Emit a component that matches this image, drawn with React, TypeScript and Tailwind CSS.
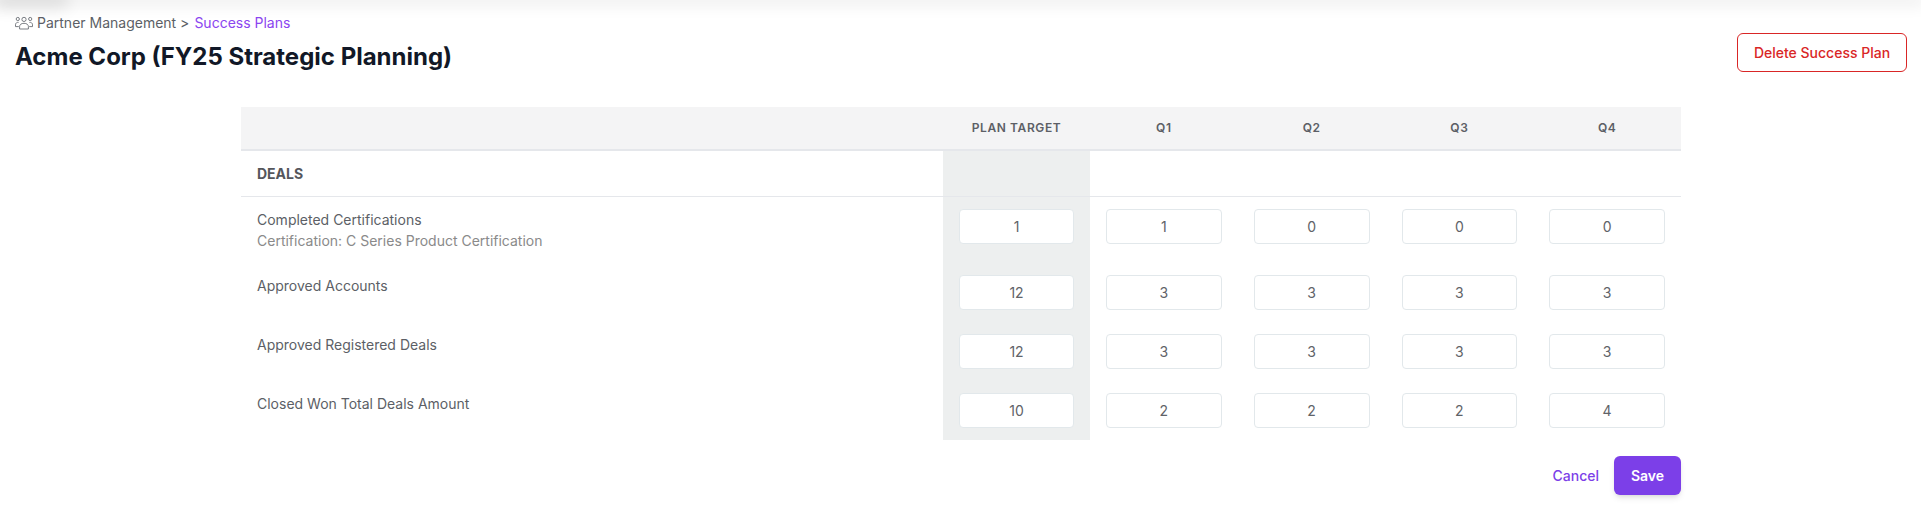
import React from "react";

const rows = [
    { label: "Completed Certifications", sub: "Certification: C Series Product Certification", plan: "1", q: ["1", "0", "0", "0"] },
    { label: "Approved Accounts", plan: "12", q: ["3", "3", "3", "3"] },
    { label: "Approved Registered Deals", plan: "12", q: ["3", "3", "3", "3"] },
    { label: "Closed Won Total Deals Amount", plan: "10", q: ["2", "2", "2", "4"] },
];

const PartnerIcon = () => (
    <svg width="18" height="14" viewBox="0 0 18 14" fill="none" stroke="#6b6f76" strokeWidth="0.9">
        <circle cx="9" cy="3.4" r="2.1" />
        <circle cx="2.8" cy="3" r="1.6" />
        <circle cx="15.2" cy="3" r="1.6" />
        <path d="M4.6 13V10.6C4.6 8.6 6.4 7.3 9 7.3C11.6 7.3 13.4 8.6 13.4 10.6V13H4.6Z" />
        <path d="M3.6 6.4C2 6.1 0.5 7 0.5 8.8V10.6H3.8" />
        <path d="M14.4 6.4C16 6.1 17.5 7 17.5 8.8V10.6H14.2" />
    </svg>
);

const NumberBox = ({ value }: { value: string }) => (
    <input
        readOnly
        value={value}
        className="block w-full h-[35px] rounded border border-[#e2e8eb] bg-white text-center text-sm text-[#5f6368] outline-none"
    />
);

const App = () => {
    return (
        <div className="relative h-[522px] bg-white text-sm text-[#5c5f66] font-['Inter',sans-serif] overflow-hidden">
            <div className="h-0 shadow-[0_0_16px_4px_rgba(0,0,0,0.1)]" />
            <div className="h-0 w-[60px] shadow-[0_0_16px_8px_rgba(0,0,0,0.1)]" />
            <div className="flex justify-between pl-[15px] pr-[14px] pt-[14px]">
                <div>
                    <div className="flex items-center h-[18px] leading-[18px]">
                        <PartnerIcon />
                        <span className="ml-[4px]">Partner Management &gt; </span>
                        <span className="ml-[5px] text-[#8b45f0]">Success Plans</span>
                    </div>
                    <h1 className="mt-[9px] text-2xl leading-8 font-bold text-[#111827]">
                        Acme Corp (FY25 Strategic Planning)
                    </h1>
                </div>
                <button className="mt-[19px] h-[39px] w-[170px] rounded-md border border-[#d92626] bg-white text-sm font-medium text-[#d92626]">
                    Delete Success Plan
                </button>
            </div>

            <div className="ml-[241px] mt-[34px] w-[1440px]">
                <div className="flex h-[44px] items-center bg-[#f4f4f5] border-b-2 border-[#e5e7eb] text-xs font-semibold tracking-wider text-[#5c5f66]">
                    <div className="w-[702px]" />
                    <div className="w-[147px] text-center">PLAN TARGET</div>
                    <div className="flex-1 text-center">Q1</div>
                    <div className="flex-1 text-center">Q2</div>
                    <div className="flex-1 text-center">Q3</div>
                    <div className="flex-1 text-center">Q4</div>
                </div>
                <div className="flex h-[46px] border-b border-[#e5e7eb]">
                    <div className="w-[702px] pl-4 flex items-center text-sm font-bold text-[#54565c]">DEALS</div>
                    <div className="w-[147px] bg-[#edefef]" />
                </div>
                {rows.map((row) => (
                    <div key={row.label} className="flex">
                        <div className="w-[702px] px-4 py-3 leading-[21px]">
                            <div>{row.label}</div>
                            {row.sub && <div className="text-[#8a8a8a]">{row.sub}</div>}
                        </div>
                        <div className="w-[147px] bg-[#edefef] px-4 py-3">
                            <NumberBox value={row.plan} />
                        </div>
                        {row.q.map((v, i) => (
                            <div key={i} className="flex-1 px-4 py-3">
                                <NumberBox value={v} />
                            </div>
                        ))}
                    </div>
                ))}
                <div className="mt-4 flex items-center justify-end">
                    <button className="text-sm font-medium text-[#7c3fe8]">Cancel</button>
                    <button className="ml-[15px] h-[39px] w-[67px] rounded-md bg-[#7c3fe8] text-sm font-semibold text-white shadow-md">
                        Save
                    </button>
                </div>
            </div>
        </div>
    );
};

export default App;
